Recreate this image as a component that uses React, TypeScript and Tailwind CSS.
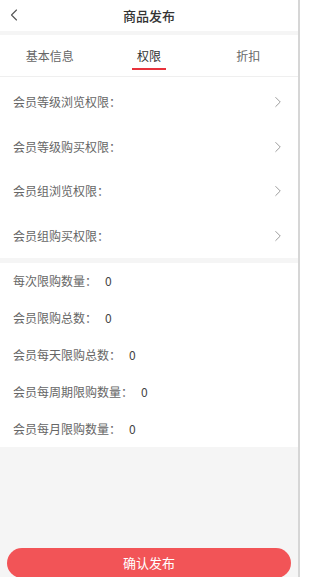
import { ChevronLeft, ChevronRight } from "lucide-react";

const browseRows = ["会员等级浏览权限：", "会员等级购买权限：", "会员组浏览权限：", "会员组购买权限："];

const limitRows = [
  { label: "每次限购数量：", value: "0" },
  { label: "会员限购总数：", value: "0" },
  { label: "会员每天限购总数：", value: "0" },
  { label: "会员每周期限购数量：", value: "0" },
  { label: "会员每月限购数量：", value: "0" },
];

const tabs = ["基本信息", "权限", "折扣"];

export default function App() {
  return (
    <div
      className="w-[300px] h-[577px] overflow-hidden flex flex-col bg-[#f5f5f5] border-r-2 border-[#d6d6d6] text-[12px] text-[#666]"
      style={{ fontFamily: '"Noto Sans CJK SC", "Noto Sans", sans-serif' }}
    >
      {/* Header */}
      <div className="relative h-[31px] shrink-0 bg-white flex items-center justify-center">
        <ChevronLeft size={20} strokeWidth={1.3} className="absolute left-[4px] top-[5px] text-[#555]" />
        <span className="text-[13px] font-medium text-[#333]">商品发布</span>
      </div>

      <div className="h-[4px] shrink-0" />

      {/* Tabs */}
      <div className="grid grid-cols-3 h-[42px] shrink-0 bg-white border-b border-[#efefef]">
        {tabs.map((t, i) => (
          <div key={t} className="relative flex items-center justify-center">
            <span className={i === 1 ? "text-[#333]" : "text-[#666]"}>{t}</span>
            {i === 1 && (
              <div className="absolute bottom-[6px] left-1/2 -translate-x-1/2 w-[34px] h-[2px] bg-[#e8323c]" />
            )}
          </div>
        ))}
      </div>

      {/* Permission rows */}
      <div className="bg-white pt-[3px] shrink-0">
        {browseRows.map((r) => (
          <div key={r} className="h-[44.5px] flex items-center justify-between pl-[13px] pr-[11px]">
            <span>{r}</span>
            <ChevronRight size={18} strokeWidth={1.3} className="text-[#999]" />
          </div>
        ))}
      </div>

      <div className="h-[5px] shrink-0" />

      {/* Limit rows */}
      <div className="bg-white shrink-0">
        {limitRows.map((r) => (
          <div key={r.label} className="h-[36.8px] flex items-center pl-[13px]">
            <span>{r.label}</span>
            <span className="ml-[8px] text-[#444]">{r.value}</span>
          </div>
        ))}
      </div>

      {/* Submit */}
      <div className="pt-[101px] px-[7px] shrink-0">
        <button className="w-full h-[30px] rounded-full bg-[#f25457] text-white text-[13px]">确认发布</button>
      </div>
    </div>
  );
}
